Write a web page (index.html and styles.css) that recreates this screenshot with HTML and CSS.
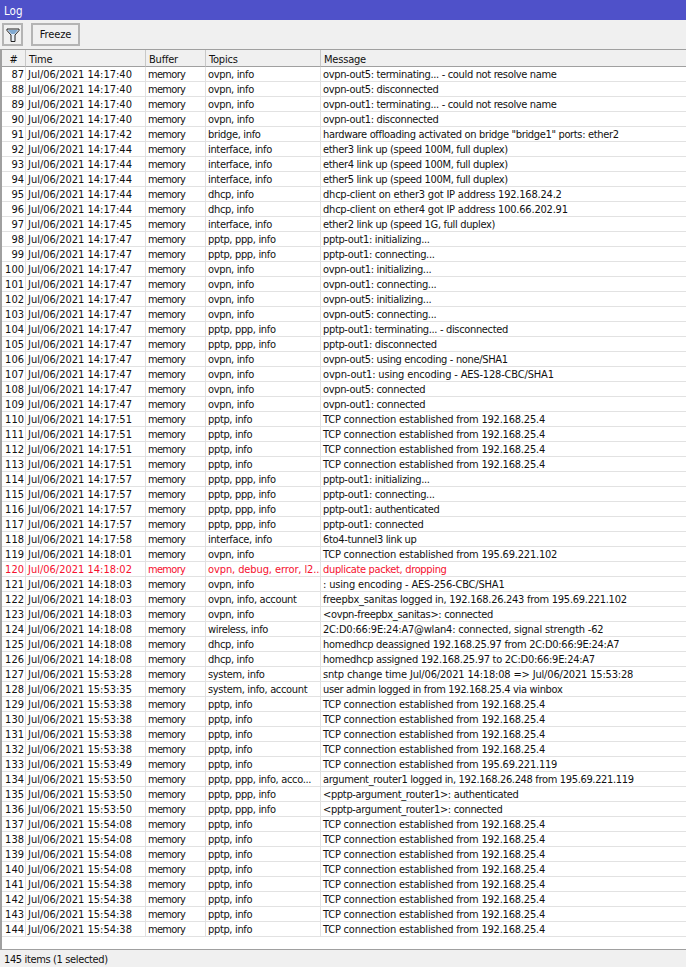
FILE: index.html
```html
<!DOCTYPE html>
<html lang="en">
<head>
<meta charset="utf-8">
<title>Log</title>
<link rel="stylesheet" href="styles.css">
</head>
<body>
<div class="window">
  <header class="titlebar">Log</header>
  <div class="toolbar">
    <button class="btn btn-icon" aria-label="Filter">
      <svg width="14" height="14" viewBox="0 0 14 14" class="funnel"><path d="M1 1h12v1.5L9 7v6.500H5V7L1 2.500z" fill="#e8eef5" stroke="#222" stroke-width="1"/><path d="M2 2h10L8.500 6h-3z" fill="#7fa8d0"/></svg>
    </button>
    <button class="btn btn-text">Freeze</button>
  </div>
  <div class="grid-wrap">
    <table class="grid">
      <colgroup><col class="c-num"><col class="c-time"><col class="c-buf"><col class="c-top"><col></colgroup>
      <thead><tr><th class="center">#</th><th>Time</th><th>Buffer</th><th>Topics</th><th>Message</th></tr></thead>
      <tbody>
<tr><td class="num">87</td><td>Jul/06/2021 14:17:40</td><td>memory</td><td>ovpn, info</td><td>ovpn-out5: terminating... - could not resolve name</td></tr>
<tr><td class="num">88</td><td>Jul/06/2021 14:17:40</td><td>memory</td><td>ovpn, info</td><td>ovpn-out5: disconnected</td></tr>
<tr><td class="num">89</td><td>Jul/06/2021 14:17:40</td><td>memory</td><td>ovpn, info</td><td>ovpn-out1: terminating... - could not resolve name</td></tr>
<tr><td class="num">90</td><td>Jul/06/2021 14:17:40</td><td>memory</td><td>ovpn, info</td><td>ovpn-out1: disconnected</td></tr>
<tr><td class="num">91</td><td>Jul/06/2021 14:17:42</td><td>memory</td><td>bridge, info</td><td>hardware offloading activated on bridge "bridge1" ports: ether2</td></tr>
<tr><td class="num">92</td><td>Jul/06/2021 14:17:44</td><td>memory</td><td>interface, info</td><td>ether3 link up (speed 100M, full duplex)</td></tr>
<tr><td class="num">93</td><td>Jul/06/2021 14:17:44</td><td>memory</td><td>interface, info</td><td>ether4 link up (speed 100M, full duplex)</td></tr>
<tr><td class="num">94</td><td>Jul/06/2021 14:17:44</td><td>memory</td><td>interface, info</td><td>ether5 link up (speed 100M, full duplex)</td></tr>
<tr class="ip"><td class="num">95</td><td>Jul/06/2021 14:17:44</td><td>memory</td><td>dhcp, info</td><td>dhcp-client on ether3 got IP address 192.168.24.2</td></tr>
<tr class="ip"><td class="num">96</td><td>Jul/06/2021 14:17:44</td><td>memory</td><td>dhcp, info</td><td>dhcp-client on ether4 got IP address 100.66.202.91</td></tr>
<tr><td class="num">97</td><td>Jul/06/2021 14:17:45</td><td>memory</td><td>interface, info</td><td>ether2 link up (speed 1G, full duplex)</td></tr>
<tr><td class="num">98</td><td>Jul/06/2021 14:17:47</td><td>memory</td><td>pptp, ppp, info</td><td>pptp-out1: initializing...</td></tr>
<tr><td class="num">99</td><td>Jul/06/2021 14:17:47</td><td>memory</td><td>pptp, ppp, info</td><td>pptp-out1: connecting...</td></tr>
<tr><td class="num">100</td><td>Jul/06/2021 14:17:47</td><td>memory</td><td>ovpn, info</td><td>ovpn-out1: initializing...</td></tr>
<tr><td class="num">101</td><td>Jul/06/2021 14:17:47</td><td>memory</td><td>ovpn, info</td><td>ovpn-out1: connecting...</td></tr>
<tr><td class="num">102</td><td>Jul/06/2021 14:17:47</td><td>memory</td><td>ovpn, info</td><td>ovpn-out5: initializing...</td></tr>
<tr><td class="num">103</td><td>Jul/06/2021 14:17:47</td><td>memory</td><td>ovpn, info</td><td>ovpn-out5: connecting...</td></tr>
<tr><td class="num">104</td><td>Jul/06/2021 14:17:47</td><td>memory</td><td>pptp, ppp, info</td><td>pptp-out1: terminating... - disconnected</td></tr>
<tr><td class="num">105</td><td>Jul/06/2021 14:17:47</td><td>memory</td><td>pptp, ppp, info</td><td>pptp-out1: disconnected</td></tr>
<tr><td class="num">106</td><td>Jul/06/2021 14:17:47</td><td>memory</td><td>ovpn, info</td><td>ovpn-out5: using encoding - none/SHA1</td></tr>
<tr class="caps"><td class="num">107</td><td>Jul/06/2021 14:17:47</td><td>memory</td><td>ovpn, info</td><td>ovpn-out1: using encoding - AES-128-CBC/SHA1</td></tr>
<tr><td class="num">108</td><td>Jul/06/2021 14:17:47</td><td>memory</td><td>ovpn, info</td><td>ovpn-out5: connected</td></tr>
<tr><td class="num">109</td><td>Jul/06/2021 14:17:47</td><td>memory</td><td>ovpn, info</td><td>ovpn-out1: connected</td></tr>
<tr class="ip"><td class="num">110</td><td>Jul/06/2021 14:17:51</td><td>memory</td><td>pptp, info</td><td>TCP connection established from 192.168.25.4</td></tr>
<tr class="ip"><td class="num">111</td><td>Jul/06/2021 14:17:51</td><td>memory</td><td>pptp, info</td><td>TCP connection established from 192.168.25.4</td></tr>
<tr class="ip"><td class="num">112</td><td>Jul/06/2021 14:17:51</td><td>memory</td><td>pptp, info</td><td>TCP connection established from 192.168.25.4</td></tr>
<tr class="ip"><td class="num">113</td><td>Jul/06/2021 14:17:51</td><td>memory</td><td>pptp, info</td><td>TCP connection established from 192.168.25.4</td></tr>
<tr><td class="num">114</td><td>Jul/06/2021 14:17:57</td><td>memory</td><td>pptp, ppp, info</td><td>pptp-out1: initializing...</td></tr>
<tr><td class="num">115</td><td>Jul/06/2021 14:17:57</td><td>memory</td><td>pptp, ppp, info</td><td>pptp-out1: connecting...</td></tr>
<tr><td class="num">116</td><td>Jul/06/2021 14:17:57</td><td>memory</td><td>pptp, ppp, info</td><td>pptp-out1: authenticated</td></tr>
<tr><td class="num">117</td><td>Jul/06/2021 14:17:57</td><td>memory</td><td>pptp, ppp, info</td><td>pptp-out1: connected</td></tr>
<tr><td class="num">118</td><td>Jul/06/2021 14:17:58</td><td>memory</td><td>interface, info</td><td>6to4-tunnel3 link up</td></tr>
<tr class="ip"><td class="num">119</td><td>Jul/06/2021 14:18:01</td><td>memory</td><td>ovpn, info</td><td>TCP connection established from 195.69.221.102</td></tr>
<tr class="err"><td class="num">120</td><td>Jul/06/2021 14:18:02</td><td>memory</td><td>ovpn, debug, error, l2...</td><td>duplicate packet, dropping</td></tr>
<tr class="caps"><td class="num">121</td><td>Jul/06/2021 14:18:03</td><td>memory</td><td>ovpn, info</td><td>: using encoding - AES-256-CBC/SHA1</td></tr>
<tr class="mid"><td class="num">122</td><td>Jul/06/2021 14:18:03</td><td>memory</td><td>ovpn, info, account</td><td>freepbx_sanitas logged in, 192.168.26.243 from 195.69.221.102</td></tr>
<tr><td class="num">123</td><td>Jul/06/2021 14:18:03</td><td>memory</td><td>ovpn, info</td><td>&lt;ovpn-freepbx_sanitas&gt;: connected</td></tr>
<tr class="ip"><td class="num">124</td><td>Jul/06/2021 14:18:08</td><td>memory</td><td>wireless, info</td><td>2C:D0:66:9E:24:A7@wlan4: connected, signal strength -62</td></tr>
<tr class="mid"><td class="num">125</td><td>Jul/06/2021 14:18:08</td><td>memory</td><td>dhcp, info</td><td>homedhcp deassigned 192.168.25.97 from 2C:D0:66:9E:24:A7</td></tr>
<tr class="mid"><td class="num">126</td><td>Jul/06/2021 14:18:08</td><td>memory</td><td>dhcp, info</td><td>homedhcp assigned 192.168.25.97 to 2C:D0:66:9E:24:A7</td></tr>
<tr class="caps"><td class="num">127</td><td>Jul/06/2021 15:53:28</td><td>memory</td><td>system, info</td><td>sntp change time Jul/06/2021 14:18:08 =&gt; Jul/06/2021 15:53:28</td></tr>
<tr><td class="num">128</td><td>Jul/06/2021 15:53:35</td><td>memory</td><td>system, info, account</td><td>user admin logged in from 192.168.25.4 via winbox</td></tr>
<tr class="ip"><td class="num">129</td><td>Jul/06/2021 15:53:38</td><td>memory</td><td>pptp, info</td><td>TCP connection established from 192.168.25.4</td></tr>
<tr class="ip"><td class="num">130</td><td>Jul/06/2021 15:53:38</td><td>memory</td><td>pptp, info</td><td>TCP connection established from 192.168.25.4</td></tr>
<tr class="ip"><td class="num">131</td><td>Jul/06/2021 15:53:38</td><td>memory</td><td>pptp, info</td><td>TCP connection established from 192.168.25.4</td></tr>
<tr class="ip"><td class="num">132</td><td>Jul/06/2021 15:53:38</td><td>memory</td><td>pptp, info</td><td>TCP connection established from 192.168.25.4</td></tr>
<tr class="ip"><td class="num">133</td><td>Jul/06/2021 15:53:49</td><td>memory</td><td>pptp, info</td><td>TCP connection established from 195.69.221.119</td></tr>
<tr><td class="num">134</td><td>Jul/06/2021 15:53:50</td><td>memory</td><td>pptp, ppp, info, acco...</td><td>argument_router1 logged in, 192.168.26.248 from 195.69.221.119</td></tr>
<tr><td class="num">135</td><td>Jul/06/2021 15:53:50</td><td>memory</td><td>pptp, ppp, info</td><td>&lt;pptp-argument_router1&gt;: authenticated</td></tr>
<tr><td class="num">136</td><td>Jul/06/2021 15:53:50</td><td>memory</td><td>pptp, ppp, info</td><td>&lt;pptp-argument_router1&gt;: connected</td></tr>
<tr class="ip"><td class="num">137</td><td>Jul/06/2021 15:54:08</td><td>memory</td><td>pptp, info</td><td>TCP connection established from 192.168.25.4</td></tr>
<tr class="ip"><td class="num">138</td><td>Jul/06/2021 15:54:08</td><td>memory</td><td>pptp, info</td><td>TCP connection established from 192.168.25.4</td></tr>
<tr class="ip"><td class="num">139</td><td>Jul/06/2021 15:54:08</td><td>memory</td><td>pptp, info</td><td>TCP connection established from 192.168.25.4</td></tr>
<tr class="ip"><td class="num">140</td><td>Jul/06/2021 15:54:08</td><td>memory</td><td>pptp, info</td><td>TCP connection established from 192.168.25.4</td></tr>
<tr class="ip"><td class="num">141</td><td>Jul/06/2021 15:54:38</td><td>memory</td><td>pptp, info</td><td>TCP connection established from 192.168.25.4</td></tr>
<tr class="ip"><td class="num">142</td><td>Jul/06/2021 15:54:38</td><td>memory</td><td>pptp, info</td><td>TCP connection established from 192.168.25.4</td></tr>
<tr class="ip"><td class="num">143</td><td>Jul/06/2021 15:54:38</td><td>memory</td><td>pptp, info</td><td>TCP connection established from 192.168.25.4</td></tr>
<tr class="ip"><td class="num">144</td><td>Jul/06/2021 15:54:38</td><td>memory</td><td>pptp, info</td><td>TCP connection established from 192.168.25.4</td></tr>
      </tbody>
    </table>
  </div>
  <footer class="statusbar">145 items (1 selected)</footer>
</div>
</body>
</html>
```

FILE: styles.css
```css
* { box-sizing: border-box; }
html, body { margin: 0; height: 100%; overflow: hidden; }
body { font-family: "DejaVu Sans Condensed", "DejaVu Sans", sans-serif; font-stretch: condensed; font-size: 11px; color: #111; background: #f0f0f0; }
.window { display: flex; flex-direction: column; height: 967px; width: 686px; }
.titlebar { height: 20px; flex: none; background: #4f51c9; color: #fff; font-size: 11.500px; line-height: 22px; padding-left: 4px; }
.toolbar { height: 29px; flex: none; display: flex; align-items: flex-start; gap: 8px; padding: 3px 0 0 2px; background: #f0f0f0; }
.btn { height: 23px; background: #f0f0f0; border: 2px solid #b4b4b4; padding: 0; font: inherit; font-stretch: condensed; color: #111; display: flex; align-items: center; justify-content: center; }
.btn-icon { width: 21px; }
.btn-text { width: 49px; letter-spacing: -0.1px; }
.grid-wrap { flex: 1; min-height: 0; background: #fff; border-top: 1px solid #a0a0a0; border-left: 2px solid #a0a0a0; overflow: hidden; }
.grid { width: 684px; table-layout: fixed; border-collapse: separate; border-spacing: 0; }
.c-num { width: 24px; }
.c-time { width: 120px; }
.c-buf { width: 60px; }
.c-top { width: 115px; }
th { height: 17px; padding: 2px 0 0 3px; line-height: 13px; letter-spacing: -0.2px; background: #f0f0f0; border-bottom: 1px solid #a0a0a0; border-right: 1px solid #c8c8c8; font-weight: normal; text-align: left; white-space: nowrap; overflow: hidden; }
th:last-child { border-right: 0; }
th.center { text-align: center; padding-left: 0; }
td { height: 15px; padding: 1px 0 0 2px; line-height: 13px; border-bottom: 1px solid #e2e2e2; border-right: 1px solid #e2e2e2; white-space: nowrap; overflow: hidden; }
td:last-child { border-right: 0; }
td.num { text-align: right; padding: 1px 1px 0 0; }
td:nth-child(3) { letter-spacing: -0.7px; }
td:nth-child(4) { letter-spacing: -0.34px; }
td:nth-child(5) { letter-spacing: -0.34px; }
.ip td:nth-child(5) { letter-spacing: -0.21px; }
.mid td:nth-child(5) { letter-spacing: -0.27px; }
.caps td:nth-child(5) { letter-spacing: -0.17px; }
.err td { color: #f5102e; }
.err td:nth-child(4) { letter-spacing: -0.1px; }
.statusbar { height: 18px; flex: none; background: #f0f0f0; border-top: 1px solid #a0a0a0; padding: 1px 0 0 4px; line-height: 17px; letter-spacing: -0.36px; }
```
